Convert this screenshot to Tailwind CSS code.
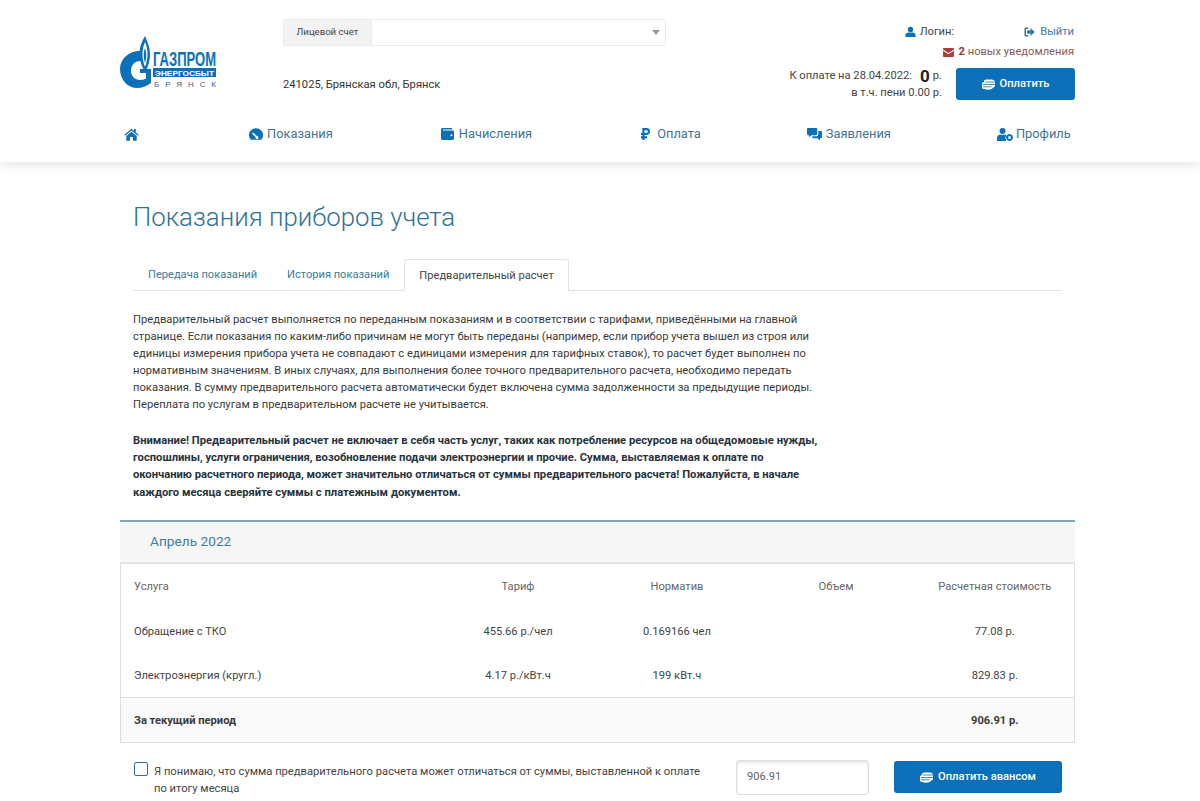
<!DOCTYPE html>
<html lang="ru">

<head>
    <meta charset="UTF-8">
    <meta name="viewport" content="width=device-width, initial-scale=1.0">
    <script src="https://cdn.jsdelivr.net/npm/@tailwindcss/browser@4"></script>
    <title>Показания приборов учета</title>
</head>

<body class="bg-white font-['Roboto',sans-serif] text-[#333] overflow-hidden h-[801px]">

    <!-- header -->
    <header class="h-[162px] bg-white shadow-[0_2px_12px_rgba(0,0,0,0.12)] relative">
        <div class="w-[955px] ml-[120px]">
            <div class="flex h-[112px]">
                <!-- logo -->
                <div class="w-[163px] pt-[36px]">
                    <svg width="130" height="53" viewBox="0 0 130 53">
                        <path fill="#0c70b8" d="M22 15C10 14 0 22 0 33C0 44 8 52 17 52C22 52 27 50 31 47V33H20V37H26V42.500C24 43.500 22 44 20 44C15 44 11 40 11 35C11 29 15 25 20 25H22Z" />
                        <path fill="#0c70b8" fill-rule="evenodd" d="M25 0C21 7 19.500 12 19.500 18C19.500 25 22 31 25 36C28 31 30 25 30 18C30 12 28 7 25 0ZM25 6C26.800 10 27.500 14 27.500 18C27.500 23 26.500 27 25 31C23.500 27 22.500 23 22.500 18C22.500 14 23.200 10 25 6Z" />
                        <path fill="#0c70b8" d="M25 12C24 15 23.800 17 23.800 19C23.800 22 24.300 25 25 27C25.700 25 26.200 22 26.200 19C26.200 17 26 15 25 12Z" />
                        <text x="33" y="30" textLength="63" lengthAdjust="spacingAndGlyphs" fill="#0c70b8" font-family="Liberation Sans, sans-serif" font-weight="700" font-size="19.500">ГАЗПРОМ</text>
                        <rect x="33" y="32" width="63" height="9" fill="#0c70b8" />
                        <text x="35" y="39.500" textLength="59" lengthAdjust="spacingAndGlyphs" fill="#fff" font-family="Liberation Sans, sans-serif" font-weight="700" font-size="8">ЭНЕРГОСБЫТ</text>
                        <text x="34" y="50.500" textLength="62" fill="#46627a" font-family="Liberation Sans, sans-serif" font-size="8">БРЯНСК</text>
                    </svg>
                </div>

                <!-- account -->
                <div class="w-[383px] pt-[19px]">
                    <div class="flex h-[27px] text-[9.600px]">
                        <div class="w-[89px] flex items-center justify-center bg-[#f3f3f3] border border-[#ececec] rounded-l-[2px] text-[#444]">Лицевой счет</div>
                        <div class="flex-1 flex items-center justify-end pr-[5px] border border-l-0 border-[#ececec] rounded-r-[2px]">
                            <span class="w-0 h-0 border-x-[4px] border-x-transparent border-t-[5px] border-t-[#999]"></span>
                        </div>
                    </div>
                    <p class="mt-[32px] text-[11.200px] leading-[14px] text-[#333]">241025, Брянская обл, Брянск</p>
                </div>

                <!-- user + payment -->
                <div class="flex-1 pt-[25px] text-[11.150px] leading-[14px]">
                    <div class="flex justify-end pr-[1px]">
                        <div class="flex items-center gap-[4px] mr-[70px] text-[#444]">
                            <svg width="11" height="12" viewBox="0 0 12 12" fill="#0c70b8"><circle cx="6" cy="3.200" r="2.900" /><path d="M0.500 11.500V9.500C0.500 7.500 2 6.500 3.500 6.500H8.500C10 6.500 11.500 7.500 11.500 9.500V11.500Z" /></svg>
                            Логин:
                        </div>
                        <div class="flex items-center gap-[5px] text-[#3a7ca8]">
                            <svg width="11" height="10" viewBox="0 0 11 10" fill="#2b79ad"><path d="M4 0.500H2C1 0.500 0.500 1.200 0.500 2V8C0.500 8.800 1 9.500 2 9.500H4V8H2V2H4Z" /><path d="M6.500 1L10.700 5L6.500 9V6.500H3V3.500H6.500Z" /></svg>
                            Выйти
                        </div>
                    </div>
                    <div class="flex justify-end items-center gap-[5px] mt-[6px] pr-[1px] text-[#8c5a5c]">
                        <svg width="11" height="9" viewBox="0 0 11 9" fill="#b23a3a"><path d="M1 0H10C10.600 0 11 0.400 11 1V1.500L5.500 5L0 1.500V1C0 0.400 0.400 0 1 0Z" /><path d="M0 2.800L5.500 6.300L11 2.800V8C11 8.600 10.600 9 10 9H1C0.400 9 0 8.600 0 8Z" /></svg>
                        <span><b class="font-bold text-[#8f3a3c]">2</b> новых уведомления</span>
                    </div>
                    <div class="flex justify-end items-center mt-[9px]">
                        <div class="text-right text-[#444] mr-[14px]">
                            <div class="flex items-center justify-end h-[16px]">К оплате на 28.04.2022:<b class="text-[17px] font-bold text-[#222] ml-[8px] mr-[3px]">0</b>р.</div>
                            <div class="mt-[2px]">в т.ч. пени 0.00 р.</div>
                        </div>
                        <div class="w-[119px] h-[32px] bg-[#0c70b8] rounded-[3px] flex items-center justify-center gap-[5px] text-white text-[11.150px] font-medium">
                            <svg width="13" height="11" viewBox="0 0 13 11"><path fill="#fff" d="M4 0.500H9.500C11.500 0.500 13 1.500 13 3V6.500C13 7.800 12 8.600 10.500 9V9.500C8 11 3 11 1 9.800C0.300 9.400 0 9 0 8.500V5C0 4 0.800 3.400 2 3V2.500C2 1.200 3 0.500 4 0.500Z" /><path fill="none" stroke="#0c70b8" stroke-width="0.800" d="M3 3H13M1 5.500H13M1 7.800H9.500" /></svg>
                            Оплатить
                        </div>
                    </div>
                </div>
            </div>

            <!-- nav -->
            <nav class="flex items-center h-[18px] mt-[13px] pl-[4px] text-[12.850px] text-[#3f7391]">
                <a class="flex items-center" href="#">
                    <svg width="15" height="13" viewBox="0 0 15 13" fill="#0c70b8"><path d="M7.500 0.800L0.300 6.800L1.100 7.800L7.500 2.500L13.900 7.800L14.700 6.800L11.800 4.400V1H10V2.900Z" /><path d="M2.300 8V12.800H6V9H9V12.800H12.700V8L7.500 3.800Z" /></svg>
                </a>
                <a class="flex items-center gap-[4px] ml-[110px]" href="#">
                    <svg width="14" height="12" viewBox="0 0 14 12" fill="#0c70b8"><path d="M7 0.300C3.200 0.300 0 3.300 0 7C0 8.800 0.600 10.300 1.500 11.500C1.700 11.700 2 11.800 2.300 11.800H11.700C12 11.800 12.300 11.700 12.500 11.500C13.400 10.300 14 8.800 14 7C14 3.300 10.800 0.300 7 0.300Z" /><path d="M3.500 5L7.600 8.800" stroke="#fff" stroke-width="1.600" /><circle cx="8" cy="9.500" r="1.500" fill="#fff" /></svg>
                    Показания
                </a>
                <a class="flex items-center gap-[5px] ml-[108px]" href="#">
                    <svg width="13" height="12" viewBox="0 0 13 12" fill="#0c70b8"><path d="M1.500 0H11V1.500H2V2.500H12C12.600 2.500 13 2.900 13 3.500V10.500C13 11.300 12.300 12 11.500 12H1.500C0.700 12 0 11.300 0 10.500V1.500C0 0.700 0.700 0 1.500 0Z" /><circle cx="10.500" cy="7.200" r="1" fill="#fff" /></svg>
                    Начисления
                </a>
                <a class="flex items-center gap-[7px] ml-[109px]" href="#">
                    <svg width="9" height="12" viewBox="0 0 9 12" fill="none" stroke="#0c70b8" stroke-width="2.200"><path d="M2.400 12V1.100H5.500C7 1.100 7.900 2 7.900 3.500C7.900 5 7 6 5.500 6H0" /><path d="M0 9.300H6" /></svg>
                    Оплата
                </a>
                <a class="flex items-center gap-[4px] ml-[106px]" href="#">
                    <svg width="15" height="13" viewBox="0 0 15 13" fill="#0c70b8"><path d="M1.200 0H9C9.700 0 10.200 0.500 10.200 1.200V6C10.200 6.700 9.700 7.200 9 7.200H4.500L2 9.200V7.200H1.200C0.500 7.200 0 6.700 0 6V1.200C0 0.500 0.500 0 1.200 0Z" /><path d="M11.300 3H13.800C14.500 3 15 3.500 15 4.200V9C15 9.700 14.500 10.200 13.800 10.200H13V12.600L10.500 10.200H6.500C5.800 10.200 5.200 9.700 5.200 9V8.300H9.500C10.500 8.300 11.300 7.500 11.300 6.500Z" /></svg>
                    Заявления
                </a>
                <a class="flex items-center gap-[3px] ml-[106px]" href="#">
                    <svg width="16" height="13" viewBox="0 0 16 13" fill="#0c70b8"><circle cx="5.500" cy="3" r="3" /><path d="M0 13V10C0 8 1.500 6.800 3.200 6.800H7.800C8.300 6.800 8.700 6.900 9 7V8.500C8 9.200 8 10.800 9 11.500V13Z" /><circle cx="12.500" cy="9.500" r="2.400" fill="none" stroke="#0c70b8" stroke-width="1.800" /><path d="M12.500 6V7.500M12.500 11.500V13M9 9.500H10.500M14.500 9.500H16" stroke="#0c70b8" stroke-width="1.400" /></svg>
                    Профиль
                </a>
            </nav>
        </div>
    </header>

    <!-- content -->
    <main class="w-[955px] ml-[120px]">
        <h1 class="pl-[13px] pt-[38px] text-[25.760px] leading-[34px] font-light text-[#2f7199]">Показания приборов учета</h1>

        <div class="ml-[13px] mr-[13px] mt-[24px] h-[33px] flex items-end border-b border-[#e2e2e2] text-[11.100px]">
            <a class="px-[15px] h-[29px] flex items-center text-[#3a7a94]" href="#">Передача показаний</a>
            <a class="px-[15px] h-[29px] flex items-center text-[#3a7a94]" href="#">История показаний</a>
            <a class="px-[14px] pt-[2px] h-[32px] -mb-px flex items-center bg-white border border-b-0 border-[#e2e2e2] rounded-t-[3px] text-[#444]" href="#">Предварительный расчет</a>
        </div>

        <p class="ml-[13px] w-[690px] mt-[20px] text-[11.200px] leading-[17px] text-[#3a3a3a]">Предварительный расчет выполняется по переданным показаниям и в соответствии с тарифами, приведёнными на главной странице. Если показания по каким-либо причинам не могут быть переданы (например, если прибор учета вышел из строя или единицы измерения прибора учета не совпадают с единицами измерения для тарифных ставок), то расчет будет выполнен по нормативным значениям. В иных случаях, для выполнения более точного предварительного расчета, необходимо передать показания. В сумму предварительного расчета автоматически будет включена сумма задолженности за предыдущие периоды. Переплата по услугам в предварительном расчете не учитывается.</p>

        <p class="ml-[13px] w-[686px] mt-[19px] text-[11.200px] leading-[17.200px] font-bold text-[#26323c]">Внимание! Предварительный расчет не включает в себя часть услуг, таких как потребление ресурсов на общедомовые нужды, госпошлины, услуги ограничения, возобновление подачи электроэнергии и прочие. Сумма, выставляемая к оплате по окончанию расчетного периода, может значительно отличаться от суммы предварительного расчета! Пожалуйста, в начале каждого месяца сверяйте суммы с платежным документом.</p>

        <!-- table -->
        <section class="mt-[19px] border-t-2 border-[#7fa8b8]">
            <div class="h-[42px] pl-[30px] pb-[2px] flex items-center bg-[#f6f6f6] border-b-2 border-[#e2e2e2] text-[13.700px] text-[#3f7c9f]">Апрель 2022</div>
            <table class="w-[955px] table-fixed border-x border-b border-[#dedede] text-[11.150px] text-[#444] border-collapse [&_th]:pt-[2px] [&_td]:pt-[2px]">
                <thead>
                    <tr class="h-[46px] text-[#666]">
                        <th class="w-[318px] pl-[13px] text-left font-normal">Услуга</th>
                        <th class="font-normal">Тариф</th>
                        <th class="font-normal">Норматив</th>
                        <th class="font-normal">Объем</th>
                        <th class="font-normal">Расчетная стоимость</th>
                    </tr>
                </thead>
                <tbody>
                    <tr class="h-[44px]">
                        <td class="pl-[13px]">Обращение с ТКО</td>
                        <td class="text-center">455.66 р./чел</td>
                        <td class="text-center">0.169166 чел</td>
                        <td></td>
                        <td class="text-center">77.08 р.</td>
                    </tr>
                    <tr class="h-[44px]">
                        <td class="pl-[13px]">Электроэнергия (кругл.)</td>
                        <td class="text-center">4.17 р./кВт.ч</td>
                        <td class="text-center">199 кВт.ч</td>
                        <td></td>
                        <td class="text-center">829.83 р.</td>
                    </tr>
                    <tr class="h-[45px] bg-[#fafafa] border-t border-[#dedede] font-bold text-[#3a3a3a]">
                        <td class="pl-[13px]">За текущий период</td>
                        <td></td>
                        <td></td>
                        <td></td>
                        <td class="text-center">906.91 р.</td>
                    </tr>
                </tbody>
            </table>
        </section>

        <!-- pay -->
        <div class="flex items-start pl-[14px] pt-[17px]">
            <span class="mt-[2px] w-[14px] h-[14px] shrink-0 border border-[#2d6f95] rounded-[2px]"></span>
            <p class="ml-[6px] w-[548px] text-[11.200px] leading-[17px] text-[#444] mt-[3px]">Я понимаю, что сумма предварительного расчета может отличаться от суммы, выставленной к оплате по итогу месяца</p>
            <div class="ml-[34px] w-[133px] h-[35px] flex items-center pl-[10px] bg-white border border-[#dddddd] rounded-[3px] shadow-[inset_0_2px_3px_rgba(0,0,0,0.1)] text-[11.150px] text-[#666]">906.91</div>
            <div class="ml-[25px] mt-[1px] w-[168px] h-[32px] bg-[#0c70b8] rounded-[3px] flex items-center justify-center gap-[5px] text-white text-[11.150px] font-medium">
                <svg width="13" height="11" viewBox="0 0 13 11"><path fill="#fff" d="M4 0.500H9.500C11.500 0.500 13 1.500 13 3V6.500C13 7.800 12 8.600 10.500 9V9.500C8 11 3 11 1 9.800C0.300 9.400 0 9 0 8.500V5C0 4 0.800 3.400 2 3V2.500C2 1.200 3 0.500 4 0.500Z" /><path fill="none" stroke="#0c70b8" stroke-width="0.800" d="M3 3H13M1 5.500H13M1 7.800H9.500" /></svg>
                Оплатить авансом
            </div>
        </div>
    </main>

</body>

</html>
